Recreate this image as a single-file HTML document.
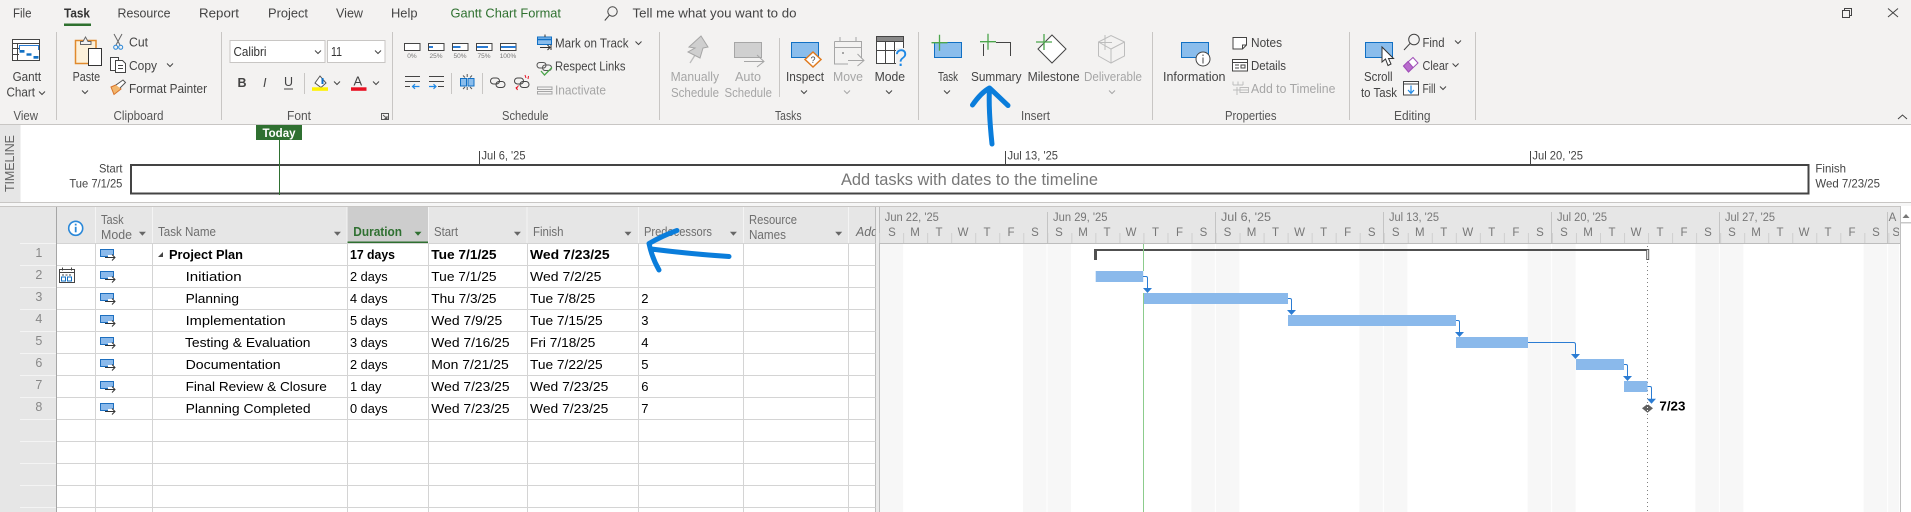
<!DOCTYPE html>
<html lang="en"><head><meta charset="utf-8"><title>Project Plan</title>
<style>
html,body{margin:0;padding:0;width:1911px;height:512px;overflow:hidden;background:#fff}
svg{display:block}
text{font-family:"Liberation Sans",sans-serif;white-space:pre}
.r{font-size:12.5px;fill:#444}
.g{font-size:12.5px;fill:#a6a6a6}
.l{font-size:12.5px;fill:#555}
.h{font-size:12.5px;fill:#6e6e6e}
.c{font-size:13px;fill:#000}
.b{font-size:13px;fill:#000;font-weight:bold}
.n{font-size:12.5px;fill:#888;text-anchor:middle}
.d{font-size:11.5px;fill:#777;text-anchor:middle}
.t{font-size:12px;fill:#444}
.p{font-size:6.5px;fill:#777;text-anchor:middle}
.ch{fill:none;stroke:#444;stroke-width:1}
.i{fill:none;stroke:#444;stroke-width:1}
</style></head><body>
<svg xmlns="http://www.w3.org/2000/svg" width="1911" height="512" viewBox="0 0 1911 512">
<defs>
<path id="chev" d="M-3-1.5 0 1.5 3-1.5" fill="none" stroke="#444" stroke-width="1"/>
<path id="chevg" d="M-3-1.5 0 1.5 3-1.5" fill="none" stroke="#a6a6a6" stroke-width="1"/>
<path id="drop" d="M-3.5-2H3.5L0 2Z" fill="#666"/>
<g id="tm"><rect x=".5" y=".5" width="13" height="7" fill="#8ab9eb" stroke="#1d6fc0"/><path d="M8 8h6V6H8z" fill="#fff"/><path d="M5 8.5H15M12 5.5l3 3-3 3" fill="none" stroke="#333" stroke-width="1"/></g>
<g id="add"><path d="M0-8V8M-8 0H8" stroke="#4ca64c" stroke-width="1.3"/></g>
<g id="bluerect"><rect x=".5" y=".5" width="27" height="15" fill="#8abdec" stroke="#1170c4"/></g>
</defs>

<!-- ribbon -->
<rect width="1911" height="125" fill="#f3f2f1"/>
<rect y="124" width="1911" height="1" fill="#c8c6c4"/>
<text x="13" y="17.5" class="r" textLength="18.5" lengthAdjust="spacingAndGlyphs">File</text>
<text x="64" y="17.5" class="r" font-weight="bold" textLength="26" lengthAdjust="spacingAndGlyphs" style="fill:#333">Task</text>
<rect x="64" y="23.5" width="27" height="2.5" fill="#2f7130"/>
<text x="117.5" y="17.5" class="r" textLength="53" lengthAdjust="spacingAndGlyphs">Resource</text>
<text x="199" y="17.5" class="r" textLength="40" lengthAdjust="spacingAndGlyphs">Report</text>
<text x="268" y="17.5" class="r" textLength="40" lengthAdjust="spacingAndGlyphs">Project</text>
<text x="336" y="17.5" class="r" textLength="27" lengthAdjust="spacingAndGlyphs">View</text>
<text x="391" y="17.5" class="r" textLength="26.5" lengthAdjust="spacingAndGlyphs">Help</text>
<text x="450.5" y="17.5" class="r" style="fill:#2f7130" textLength="110.5" lengthAdjust="spacingAndGlyphs">Gantt Chart Format</text>
<g class="i"><circle cx="612.5" cy="11.5" r="4.7"/><path d="M609.5 15 604.8 20.5"/></g>
<text x="632.5" y="17.5" class="r" textLength="164" lengthAdjust="spacingAndGlyphs">Tell me what you want to do</text>
<!-- window -->
<g class="i"><rect x="1842.5" y="10.5" width="7" height="7"/><path d="M1844.5 10.5V8.5h7v7h-2"/><path d="M1888 8.5 1898 17M1898 8.5 1888 17"/></g>
<path d="M1898 119 1902.5 115 1907 119" class="ch"/>

<!-- group seps -->
<path d="M56.5 32V120M221.5 32V120M392.5 32V120M659.5 32V120M918.5 32V120M1152.5 32V120M1349.5 32V120M1475.5 32V120" stroke="#c8c6c4" fill="none"/>
<text x="13.5" y="120" class="l" textLength="24.5" lengthAdjust="spacingAndGlyphs">View</text>
<text x="113.5" y="120" class="l" textLength="50" lengthAdjust="spacingAndGlyphs">Clipboard</text>
<text x="287" y="120" class="l" textLength="24" lengthAdjust="spacingAndGlyphs">Font</text>
<text x="502" y="120" class="l" textLength="46.5" lengthAdjust="spacingAndGlyphs">Schedule</text>
<text x="775" y="120" class="l" textLength="26.5" lengthAdjust="spacingAndGlyphs">Tasks</text>
<text x="1021" y="120" class="l" textLength="29" lengthAdjust="spacingAndGlyphs">Insert</text>
<text x="1225" y="120" class="l" textLength="51.5" lengthAdjust="spacingAndGlyphs">Properties</text>
<text x="1394" y="120" class="l" textLength="36.5" lengthAdjust="spacingAndGlyphs">Editing</text>

<!-- Gantt chart button -->
<rect x="12.5" y="39.5" width="27" height="21" fill="#fff" stroke="#444"/>
<path d="M12.5 43.5H39.5M17.5 43.5V60.5M12.5 48.5H19M12.5 54.5H19" stroke="#444" fill="none"/>
<path d="M19.5 50V45.5H38.5V50" fill="none" stroke="#2b7cd3"/>
<rect x="19.5" y="50" width="5" height="2.7" fill="#1170c4"/><rect x="26.5" y="53.3" width="5" height="2.4" fill="#1170c4"/><rect x="33.5" y="56" width="5" height="2.7" fill="#1170c4"/>
<text x="12.6" y="81" class="r" textLength="28.5" lengthAdjust="spacingAndGlyphs">Gantt</text>
<text x="6.5" y="96.5" class="r" textLength="28.5" lengthAdjust="spacingAndGlyphs">Chart</text>
<use href="#chev" x="42" y="93"/>

<!-- Clipboard -->
<rect x="75.5" y="40.5" width="20.5" height="23" fill="#fdf1da" stroke="#e08a2c" stroke-width="1.5"/>
<path d="M80.5 44.5V41.5H83L85.5 37 88 41.5H91V44.5Z" fill="#f3f2f1" stroke="#666"/>
<rect x="88.5" y="48.5" width="13" height="17" fill="#fff" stroke="#333"/>
<text x="72.6" y="81" class="r" textLength="27.5" lengthAdjust="spacingAndGlyphs">Paste</text>
<use href="#chev" x="85" y="92"/>
<path d="M114 34 120 45M122 34 116 45" stroke="#666" fill="none"/><circle cx="115.7" cy="47.3" r="2" fill="none" stroke="#2b88d8"/><circle cx="120.7" cy="47.3" r="2" fill="none" stroke="#2b88d8"/>
<text x="129" y="46.7" class="r" textLength="19" lengthAdjust="spacingAndGlyphs">Cut</text>
<path d="M115.5 70.5H110.5V57.5H118.5V60" fill="#fff" stroke="#444"/><path d="M115.5 60.5H122.5L125.5 63.5V72.5H115.5Z" fill="#fff" stroke="#444"/><path d="M118 65.5H123M118 68.5H123" stroke="#444" fill="none"/>
<text x="129" y="70" class="r" textLength="28" lengthAdjust="spacingAndGlyphs">Copy</text>
<use href="#chev" x="170" y="65"/>
<path d="M111 87 118 84 121 89 114 94.5Z" fill="#f2b66c" stroke="#d8732a"/><path d="M116 85 123 80 125.5 82.5 120 88" fill="#fff" stroke="#555"/>
<text x="129" y="93" class="r" textLength="78" lengthAdjust="spacingAndGlyphs">Format Painter</text>

<!-- Font -->
<rect x="230" y="40.5" width="95" height="22" fill="#fff" stroke="#c8c6c4"/>
<rect x="327.5" y="40.5" width="57.5" height="22" fill="#fff" stroke="#c8c6c4"/>
<text x="233.5" y="56" class="r" style="fill:#333" textLength="33" lengthAdjust="spacingAndGlyphs">Calibri</text>
<text x="331" y="56" class="r" style="fill:#333" textLength="11" lengthAdjust="spacingAndGlyphs">11</text>
<use href="#chev" x="318" y="52"/><use href="#chev" x="378" y="52"/>
<text x="237.5" y="87" class="r" font-weight="bold" style="fill:#444">B</text>
<text x="263" y="87" class="r" font-style="italic" style="fill:#444">I</text>
<text x="284" y="86" class="r" style="fill:#444">U</text><rect x="284" y="88.5" width="9" height="1" fill="#444"/>
<path d="M304.5 73V94" stroke="#c8c6c4"/>
<path d="M315 83 320 76 326 83 321 87.5Z" fill="#fff" stroke="#555"/><path d="M322.5 78V84" stroke="#1170c4" stroke-width="2"/>
<rect x="312" y="87.3" width="16" height="3.5" fill="#fff200"/>
<use href="#chev" x="337" y="83"/>
<text x="353.5" y="85.5" class="r" style="fill:#444;font-size:13px">A</text>
<rect x="351" y="87.3" width="15.5" height="3.5" fill="#e81123"/>
<use href="#chev" x="376" y="83"/>
<path d="M381.5 113.5H388.5V119.5H381.5ZM383 115 387 118.5M387 116V118.5H384.5" fill="none" stroke="#555"/>

<!-- Schedule -->
<g fill="#fff" stroke="#444">
<rect x="404.5" y="43.5" width="15.5" height="7"/><rect x="428.5" y="43.5" width="15.5" height="7"/><rect x="452.5" y="43.5" width="15.5" height="7"/><rect x="476.5" y="43.5" width="15.5" height="7"/><rect x="500.5" y="43.5" width="15.5" height="7"/>
</g>
<g fill="#2b7cd3"><rect x="429" y="46" width="4" height="2"/><rect x="453" y="46" width="7.5" height="2"/><rect x="477" y="46" width="11" height="2"/><rect x="501" y="46" width="15" height="2"/></g>
<text x="412" y="58" class="p">0%</text><text x="436" y="58" class="p">25%</text><text x="460" y="58" class="p">50%</text><text x="484" y="58" class="p">75%</text><text x="508" y="58" class="p">100%</text>
<path d="M405 76.5H420M405 81.5H420M405 86.5H410M429 76.5H444M429 81.5H444M438 86.5H444" stroke="#444" fill="none"/>
<path d="M419.5 86.5H412.5M415 84.2 412.5 86.5 415 88.8M429 86.5H436M433.5 84.2 436 86.5 433.5 88.8" stroke="#1e88e5" fill="none" stroke-width="1.2"/>
<path d="M451.5 73V94M482.5 73V94" stroke="#c8c6c4"/>
<rect x="460.5" y="78.5" width="6" height="7.5" fill="#8abdec" stroke="#1170c4"/><rect x="468" y="78.5" width="6" height="7.5" fill="#8abdec" stroke="#1170c4"/>
<path d="M463 75.5 465 77.5M472 75.5 470 77.5M467.2 74V77M463 89 465 87M472 89 470 87M467.2 87V90" stroke="#555" fill="none"/>
<rect x="490.5" y="78" width="9" height="6" rx="3" fill="none" stroke="#444"/><rect x="496" y="81.5" width="9" height="6" rx="3" fill="none" stroke="#444"/>
<rect x="514.5" y="78" width="9" height="6" rx="3" fill="none" stroke="#444"/><rect x="520" y="81.5" width="9" height="6" rx="3" fill="none" stroke="#444"/>
<path d="M525 75 526 78M528.5 76 528 79M516 87 517.5 90M518.5 85.5 516 89" stroke="#e81123" fill="none"/>
<rect x="537.5" y="37" width="14" height="7.5" fill="#8abdec" stroke="#1170c4"/><path d="M537.5 39.5H551.5" stroke="#1170c4" stroke-width="1.5"/><path d="M545 34.5V37M540 47.5H550M547.5 45 550 47.5 547.5 50M551 44.5V50" stroke="#333" fill="none"/>
<text x="555" y="47.5" class="r" textLength="73.5" lengthAdjust="spacingAndGlyphs">Mark on Track</text>
<use href="#chev" x="638.5" y="43"/>
<rect x="537" y="62.5" width="9" height="5.5" rx="2.7" fill="none" stroke="#555"/><rect x="542.5" y="65" width="9" height="5.5" rx="2.7" fill="none" stroke="#555"/>
<path d="M541 71 544.5 75 552 67.5" fill="none" stroke="#4ca64c" stroke-width="1.3"/>
<text x="555" y="70.5" class="r" textLength="70.5" lengthAdjust="spacingAndGlyphs">Respect Links</text>
<rect x="537.5" y="87" width="14.5" height="2.5" fill="none" stroke="#a6a6a6"/><rect x="537.5" y="91.5" width="14.5" height="2.5" fill="none" stroke="#a6a6a6"/>
<text x="555" y="94.5" class="g" textLength="51" lengthAdjust="spacingAndGlyphs">Inactivate</text>

<!-- Tasks -->
<path d="M690 63 697 52" stroke="#bdbdbd" fill="none" stroke-width="1.3"/><path d="M689 47 701 36 708 47 703 48 700 58 688 52 695 48Z" fill="#cfcfcf" stroke="#a6a6a6"/>
<text x="670.6" y="81" class="g" textLength="48.4" lengthAdjust="spacingAndGlyphs">Manually</text>
<text x="671" y="97" class="g" textLength="48" lengthAdjust="spacingAndGlyphs">Schedule</text>
<rect x="734.5" y="42.5" width="27" height="15" fill="#d0d0d0" stroke="#a6a6a6"/><path d="M744 61.5H764M757 55 764 61.5 757 67" fill="none" stroke="#a6a6a6"/>
<text x="735" y="81" class="g" textLength="26" lengthAdjust="spacingAndGlyphs">Auto</text>
<text x="724.5" y="97" class="g" textLength="47.5" lengthAdjust="spacingAndGlyphs">Schedule</text>
<path d="M779.5 38V97" stroke="#c8c6c4"/>
<use href="#bluerect" x="791" y="42"/>
<path d="M813 52 821 59.5 813 67 805 59.5Z" fill="#fff" stroke="#e07b20" stroke-width="1.5"/>
<text x="813" y="63" text-anchor="middle" style="font-size:9px;fill:#444">?</text>
<text x="786" y="81" class="r" textLength="38" lengthAdjust="spacingAndGlyphs">Inspect</text>
<use href="#chev" x="804" y="92"/>
<path d="M834.5 41.5H861.5V58M834.5 41.5V64H848M834.5 47.5H861.5M840 37V41M856 37V41" fill="none" stroke="#a6a6a6"/><path d="M848 60.5H864M857.5 54 864 60.5 857.5 66" fill="none" stroke="#a6a6a6"/><rect x="842" y="52" width="2" height="2" fill="#a6a6a6"/>
<text x="833" y="81" class="g" textLength="30" lengthAdjust="spacingAndGlyphs">Move</text>
<use href="#chevg" x="847" y="92"/>
<rect x="876.5" y="36.5" width="27" height="27" fill="#fff" stroke="#444"/><rect x="876.5" y="36.5" width="27" height="5" fill="#888" stroke="#444"/>
<path d="M876.5 50.5H903.5M885.5 41.5V63.5M894.5 41.5V63.5" stroke="#444" fill="none"/>
<rect x="896" y="48" width="11" height="18" fill="#f3f2f1"/>
<text x="895" y="66" style="font-size:24px;fill:#1e88e5" textLength="12" lengthAdjust="spacingAndGlyphs">?</text>
<text x="874.6" y="81" class="r" textLength="30.5" lengthAdjust="spacingAndGlyphs">Mode</text>
<use href="#chev" x="889" y="92"/>

<!-- Insert -->
<use href="#bluerect" x="934" y="42"/><use href="#add" x="939.5" y="42.7"/>
<text x="938" y="81" class="r" textLength="20" lengthAdjust="spacingAndGlyphs">Task</text>
<use href="#chev" x="947" y="92"/>
<path d="M983.5 44V56M996 42.5H1010.5V56" fill="none" stroke="#444"/><use href="#add" x="988" y="41.7"/>
<text x="971" y="81" class="r" textLength="50.5" lengthAdjust="spacingAndGlyphs">Summary</text>
<path d="M1052 35 1066 49 1052 63 1038 49Z" fill="#fff" stroke="#444"/><use href="#add" x="1044" y="42"/>
<text x="1027.6" y="81" class="r" textLength="52" lengthAdjust="spacingAndGlyphs">Milestone</text>
<path d="M1098.5 42 1111 35.5 1124.5 42V56L1111 63 1098.5 56ZM1098.5 42 1111 49 1124.5 42M1111 49V63" fill="none" stroke="#bdbdbd"/><path d="M1105 35V50M1098 42.5H1112" stroke="#bdbdbd"/>
<text x="1084" y="81" class="g" textLength="58" lengthAdjust="spacingAndGlyphs">Deliverable</text>
<use href="#chevg" x="1112" y="92"/>

<!-- Properties -->
<use href="#bluerect" x="1181" y="42"/>
<circle cx="1203" cy="59" r="7" fill="#fff" stroke="#444"/><rect x="1202.5" y="57.5" width="1" height="6" fill="#444"/><rect x="1202.5" y="54.5" width="1" height="1.5" fill="#444"/>
<text x="1163" y="81" class="r" textLength="62.5" lengthAdjust="spacingAndGlyphs">Information</text>
<path d="M1233 37.5H1246.5V45L1242.5 49H1233ZM1242.5 49V45H1246.5" fill="#fff" stroke="#444"/>
<text x="1251" y="47" class="r" textLength="31" lengthAdjust="spacingAndGlyphs">Notes</text>
<rect x="1232.5" y="59.5" width="15" height="11.5" fill="#fff" stroke="#444"/><path d="M1232.5 62.5H1247.5M1235 65H1239M1235 68H1239M1241 65H1245V68H1241Z" stroke="#444" fill="none"/>
<text x="1251" y="70" class="r" textLength="35" lengthAdjust="spacingAndGlyphs">Details</text>
<path d="M1233 85H1243M1233 81.5V85M1243 81.5V85M1238 81.5V85M1233 90H1248M1240 87.5H1248.5V92.5H1240ZM1237 87V95" stroke="#bdbdbd" fill="none"/>
<text x="1251" y="93" class="g" textLength="84.4" lengthAdjust="spacingAndGlyphs">Add to Timeline</text>

<!-- Editing -->
<use href="#bluerect" x="1365" y="42"/>
<path d="M1382 47V62L1385.5 59 1388 65.5 1391 64 1388.5 58.5H1393.5Z" fill="#fff" stroke="#333"/>
<text x="1364" y="81" class="r" textLength="28.6" lengthAdjust="spacingAndGlyphs">Scroll</text>
<text x="1361" y="97" class="r" textLength="36" lengthAdjust="spacingAndGlyphs">to Task</text>
<circle cx="1414" cy="39.5" r="5.3" fill="none" stroke="#444"/><path d="M1410 43.5 1404 50" stroke="#444"/>
<text x="1422.5" y="47" class="r" textLength="22" lengthAdjust="spacingAndGlyphs">Find</text>
<use href="#chev" x="1458" y="42"/>
<path d="M1403.5 66 1413 57.5 1418 63 1408.5 72Z" fill="#fff" stroke="#a04fb8"/><path d="M1403.5 66 1408 61.5 1413 67.5 1408.5 72Z" fill="#b86ccc" stroke="#a04fb8"/>
<text x="1422.5" y="70" class="r" textLength="26" lengthAdjust="spacingAndGlyphs">Clear</text>
<use href="#chev" x="1455.6" y="65"/>
<rect x="1403.5" y="81.5" width="15" height="13.5" fill="#fff" stroke="#444"/><path d="M1403.5 84H1418.5" stroke="#444"/><path d="M1411 85.5V93M1408 90 1411 93.3 1414 90" stroke="#1e88e5" fill="none" stroke-width="1.2"/>
<text x="1422.5" y="93" class="r" textLength="13" lengthAdjust="spacingAndGlyphs">Fill</text>
<use href="#chev" x="1443" y="88"/>

<!-- timeline -->
<rect y="125" width="20.5" height="78" fill="#e6e6e6"/>
<text transform="translate(14 192) rotate(-90)" style="font-size:12.5px;fill:#666" textLength="57">TIMELINE</text>
<rect x="256" y="125" width="46" height="15" fill="#2f7031"/>
<text x="279" y="137" text-anchor="middle" style="font-size:11.5px;font-weight:bold;fill:#fff">Today</text>
<text x="99" y="172.7" class="t" textLength="23.5" lengthAdjust="spacingAndGlyphs">Start</text>
<text x="69.4" y="187.7" class="t" textLength="53" lengthAdjust="spacingAndGlyphs">Tue 7/1/25</text>
<text x="1815.4" y="172.7" class="t" textLength="30.6" lengthAdjust="spacingAndGlyphs">Finish</text>
<text x="1815.4" y="187.7" class="t" textLength="64.6" lengthAdjust="spacingAndGlyphs">Wed 7/23/25</text>
<path d="M479.5 151V164M1005.5 151V164M1530.5 151V164" stroke="#444"/>
<text x="481.5" y="159.5" class="t" textLength="44" lengthAdjust="spacingAndGlyphs">Jul 6, '25</text>
<text x="1007.5" y="159.5" class="t" textLength="50.5" lengthAdjust="spacingAndGlyphs">Jul 13, '25</text>
<text x="1532.4" y="159.5" class="t" textLength="50.6" lengthAdjust="spacingAndGlyphs">Jul 20, '25</text>
<rect x="131" y="165" width="1677.5" height="28.5" fill="#fff" stroke="#444" stroke-width="2"/>
<path d="M279.5 140V195" stroke="#2f7031"/>
<text x="841" y="185" style="font-size:16.5px;fill:#777" textLength="257" lengthAdjust="spacingAndGlyphs">Add tasks with dates to the timeline</text>
<rect y="202" width="1911" height="1" fill="#c8c6c4"/>
<rect y="203" width="1911" height="4" fill="#f6f6f6"/>

<!-- table base -->
<rect y="207" width="57" height="305" fill="#e6e6e6"/>
<rect x="57" y="207" width="819" height="36" fill="#e6e6e6"/>
<rect x="347" y="207" width="81.5" height="36" fill="#cdcdcd"/>
<rect x="347" y="241.5" width="81.5" height="2.2" fill="#2f7031"/>
<rect x="880" y="207" width="1020" height="36" fill="#e6e6e6"/>
<rect x="875.5" y="207" width="4.5" height="305" fill="#ececec"/>
<path d="M875.5 207V512M879.5 207V512" stroke="#bdbdbd"/>
<rect y="206" width="1900" height="1" fill="#c8c6c4"/>
<path d="M95.5 207V243M152.5 207V243M347 207V243M428.5 207V243M527 207V243M638.5 207V243M743.5 207V243M848.5 207V243" stroke="#f4f4f4"/>
<path d="M95.5 244V512M152.5 244V512M347.5 244V512M428.5 244V512M527.5 244V512M638.5 244V512M743.5 244V512M848.5 244V512" stroke="#d4d4d4"/>
<path d="M57 243.5H875.5M57 265.5H875.5M57 287.5H875.5M57 309.5H875.5M57 331.5H875.5M57 353.5H875.5M57 375.5H875.5M57 397.5H875.5M57 419.5H875.5M57 441.5H875.5M57 463.5H875.5M57 485.5H875.5M57 507.5H875.5" stroke="#d4d4d4"/>
<path d="M20 243.5H56M20 265.5H56M20 287.5H56M20 309.5H56M20 331.5H56M20 353.5H56M20 375.5H56M20 397.5H56M20 419.5H56M20 441.5H56M20 463.5H56M20 485.5H56M20 507.5H56" stroke="#f4f4f4"/>
<path d="M56.5 207V512" stroke="#a6a6a6"/>

<!-- header text -->
<circle cx="75.7" cy="228.3" r="7" fill="#fff" stroke="#2b88d8" stroke-width="1.6"/><rect x="74.8" y="226.8" width="1.8" height="5.5" fill="#2b88d8"/><rect x="74.8" y="223.7" width="1.8" height="1.8" fill="#2b88d8"/>
<text x="101" y="224" class="h" textLength="22.6" lengthAdjust="spacingAndGlyphs">Task</text>
<text x="101" y="239" class="h" textLength="31" lengthAdjust="spacingAndGlyphs">Mode</text>
<text x="158" y="236" class="h" textLength="58" lengthAdjust="spacingAndGlyphs">Task Name</text>
<text x="353.3" y="236" class="h" style="fill:#2f7031;font-weight:bold" textLength="48.7" lengthAdjust="spacingAndGlyphs">Duration</text>
<text x="434" y="236" class="h" textLength="24" lengthAdjust="spacingAndGlyphs">Start</text>
<text x="533" y="236" class="h" textLength="30.5" lengthAdjust="spacingAndGlyphs">Finish</text>
<text x="644" y="236" class="h" textLength="68" lengthAdjust="spacingAndGlyphs">Predecessors</text>
<text x="749" y="224" class="h" textLength="48" lengthAdjust="spacingAndGlyphs">Resource</text>
<text x="749" y="239" class="h" textLength="37" lengthAdjust="spacingAndGlyphs">Names</text>
<svg x="850" y="207" width="25.5" height="36"><text x="6" y="29" class="h" font-style="italic" textLength="22" lengthAdjust="spacingAndGlyphs">Add</text></svg>
<use href="#drop" x="142.4" y="233.7"/><use href="#drop" x="337.4" y="233.7"/>
<path d="M414.5 231.7H421.5L418 235.7Z" fill="#2f7031"/>
<use href="#drop" x="517.4" y="233.7"/><use href="#drop" x="628" y="233.7"/><use href="#drop" x="733.4" y="233.7"/><use href="#drop" x="838.7" y="233.7"/>

<!-- rows -->
<g>
<text x="38.8" y="257" class="n">1</text><text x="38.8" y="279" class="n">2</text><text x="38.8" y="301" class="n">3</text><text x="38.8" y="323" class="n">4</text><text x="38.8" y="345" class="n">5</text><text x="38.8" y="367" class="n">6</text><text x="38.8" y="389" class="n">7</text><text x="38.8" y="411" class="n">8</text>
</g>
<use href="#tm" x="100" y="249"/><use href="#tm" x="100" y="271"/><use href="#tm" x="100" y="293"/><use href="#tm" x="100" y="315"/><use href="#tm" x="100" y="337"/><use href="#tm" x="100" y="359"/><use href="#tm" x="100" y="381"/><use href="#tm" x="100" y="403"/>
<rect x="59.5" y="269.5" width="15" height="13" fill="#fff" stroke="#444"/><path d="M59.5 272.5H74.5M62.5 267.5V270.5M71.5 267.5V270.5" stroke="#444" fill="none"/><path d="M62 275H72" stroke="#444" stroke-dasharray="2 1.5"/><rect x="61.5" y="277" width="4" height="4" fill="#fff" stroke="#1170c4"/><rect x="67.5" y="277" width="4" height="4" fill="#fff" stroke="#1170c4"/>
<path d="M158 257 163 252V257Z" fill="#444"/>

<text x="169" y="259" class="b" textLength="74" lengthAdjust="spacingAndGlyphs">Project Plan</text>
<text x="350" y="259" class="b" textLength="45" lengthAdjust="spacingAndGlyphs">17 days</text>
<text x="431.3" y="259" class="b" textLength="65.2" lengthAdjust="spacingAndGlyphs">Tue 7/1/25</text>
<text x="530" y="259" class="b" textLength="79.6" lengthAdjust="spacingAndGlyphs">Wed 7/23/25</text>

<text x="185.6" y="281" class="c" textLength="56" lengthAdjust="spacingAndGlyphs">Initiation</text>
<text x="350" y="281" class="c" textLength="37.6" lengthAdjust="spacingAndGlyphs">2 days</text>
<text x="431.3" y="281" class="c" textLength="65.2" lengthAdjust="spacingAndGlyphs">Tue 7/1/25</text>
<text x="530" y="281" class="c" textLength="71.4" lengthAdjust="spacingAndGlyphs">Wed 7/2/25</text>

<text x="185.6" y="303" class="c" textLength="53.4" lengthAdjust="spacingAndGlyphs">Planning</text>
<text x="350" y="303" class="c" textLength="37.6" lengthAdjust="spacingAndGlyphs">4 days</text>
<text x="431.3" y="303" class="c" textLength="65.2" lengthAdjust="spacingAndGlyphs">Thu 7/3/25</text>
<text x="530" y="303" class="c" textLength="65.3" lengthAdjust="spacingAndGlyphs">Tue 7/8/25</text>
<text x="641.2" y="303" class="c">2</text>

<text x="185.6" y="325" class="c" textLength="100" lengthAdjust="spacingAndGlyphs">Implementation</text>
<text x="350" y="325" class="c" textLength="37.6" lengthAdjust="spacingAndGlyphs">5 days</text>
<text x="431.3" y="325" class="c" textLength="70.9" lengthAdjust="spacingAndGlyphs">Wed 7/9/25</text>
<text x="530" y="325" class="c" textLength="72.6" lengthAdjust="spacingAndGlyphs">Tue 7/15/25</text>
<text x="641.2" y="325" class="c">3</text>

<text x="185" y="347" class="c" textLength="125.5" lengthAdjust="spacingAndGlyphs">Testing &amp; Evaluation</text>
<text x="350" y="347" class="c" textLength="37.6" lengthAdjust="spacingAndGlyphs">3 days</text>
<text x="431.3" y="347" class="c" textLength="78.3" lengthAdjust="spacingAndGlyphs">Wed 7/16/25</text>
<text x="530" y="347" class="c" textLength="65.3" lengthAdjust="spacingAndGlyphs">Fri 7/18/25</text>
<text x="641.2" y="347" class="c">4</text>

<text x="185.6" y="369" class="c" textLength="95" lengthAdjust="spacingAndGlyphs">Documentation</text>
<text x="350" y="369" class="c" textLength="37.6" lengthAdjust="spacingAndGlyphs">2 days</text>
<text x="431.3" y="369" class="c" textLength="77.5" lengthAdjust="spacingAndGlyphs">Mon 7/21/25</text>
<text x="530" y="369" class="c" textLength="72.6" lengthAdjust="spacingAndGlyphs">Tue 7/22/25</text>
<text x="641.2" y="369" class="c">5</text>

<text x="185.6" y="391" class="c" textLength="141.2" lengthAdjust="spacingAndGlyphs">Final Review &amp; Closure</text>
<text x="350" y="391" class="c" textLength="31.5" lengthAdjust="spacingAndGlyphs">1 day</text>
<text x="431.3" y="391" class="c" textLength="78.3" lengthAdjust="spacingAndGlyphs">Wed 7/23/25</text>
<text x="530" y="391" class="c" textLength="78.3" lengthAdjust="spacingAndGlyphs">Wed 7/23/25</text>
<text x="641.2" y="391" class="c">6</text>

<text x="185.6" y="413" class="c" textLength="125" lengthAdjust="spacingAndGlyphs">Planning Completed</text>
<text x="350" y="413" class="c" textLength="37.6" lengthAdjust="spacingAndGlyphs">0 days</text>
<text x="431.3" y="413" class="c" textLength="78.3" lengthAdjust="spacingAndGlyphs">Wed 7/23/25</text>
<text x="530" y="413" class="c" textLength="78.3" lengthAdjust="spacingAndGlyphs">Wed 7/23/25</text>
<text x="641.2" y="413" class="c">7</text>

<!-- gantt header -->
<line x1="879.1" x2="1899" y1="238" y2="238" stroke="#cfcfcf" stroke-width="10" stroke-dasharray="1 23.03"/>
<path d="M1047.5 212V243M1215.5 212V243M1383.5 212V243M1551.5 212V243M1719.5 212V243M1887.5 212V243" stroke="#c4c4c4"/>
<rect x="880" y="243" width="1020" height="1" fill="#bdbdbd"/>
<text x="884.8" y="221" class="d" style="text-anchor:start" textLength="54" lengthAdjust="spacingAndGlyphs">Jun 22, '25</text>
<text x="1053" y="221" class="d" style="text-anchor:start" textLength="54.5" lengthAdjust="spacingAndGlyphs">Jun 29, '25</text>
<text x="1221" y="221" class="d" style="text-anchor:start" textLength="50" lengthAdjust="spacingAndGlyphs">Jul 6, '25</text>
<text x="1389" y="221" class="d" style="text-anchor:start" textLength="50" lengthAdjust="spacingAndGlyphs">Jul 13, '25</text>
<text x="1557" y="221" class="d" style="text-anchor:start" textLength="50" lengthAdjust="spacingAndGlyphs">Jul 20, '25</text>
<text x="1725" y="221" class="d" style="text-anchor:start" textLength="50" lengthAdjust="spacingAndGlyphs">Jul 27, '25</text>
<svg x="880" y="207" width="1019" height="36"><text x="12 35 59 83 107 131 155 179 203 227 251 275.5 299.5 323.5 347.5 371.5 395.5 419.5 443.6 467.6 491.7 515.7 539.8 563.8 587.8 611.8 635.9 659.9 684 708 732 756 780 804 828 852 876 900 924 948 972 996 1020" y="29" class="d">SMTWTFSSMTWTFSSMTWTFSSMTWTFSSMTWTFSSMTWTFSSS</text><text x="1012.5" y="14" class="d">A</text></svg>

<!-- stripes -->
<g fill="#f7f7f7">
<rect x="880" y="244" width="23.1" height="268"/>
<rect x="1023" y="244" width="23.5" height="268"/><rect x="1047.5" y="244" width="23.5" height="268"/>
<rect x="1191.3" y="244" width="23.5" height="268"/><rect x="1215.8" y="244" width="23.5" height="268"/>
<rect x="1359.4" y="244" width="23.5" height="268"/><rect x="1383.9" y="244" width="23.5" height="268"/>
<rect x="1527.6" y="244" width="23.5" height="268"/><rect x="1552.1" y="244" width="23.5" height="268"/>
<rect x="1695.4" y="244" width="23.5" height="268"/><rect x="1719.9" y="244" width="23.5" height="268"/>
<rect x="1863.6" y="244" width="23.5" height="268"/><rect x="1888.1" y="244" width="11" height="268"/>
</g>
<!-- today & project finish -->
<path d="M1647.5 246V512" stroke="#808080" stroke-dasharray="1 3"/>
<!-- summary -->
<path d="M1094 249H1649V251H1097V260H1094Z" fill="#505050"/>
<rect x="1646.7" y="249.5" width="2" height="10" fill="#fff" stroke="#606060"/>
<!-- bars -->
<g fill="#8ab9eb">
<rect x="1095.7" y="271" width="47.5" height="11"/>
<rect x="1143" y="293" width="145" height="11"/>
<rect x="1288" y="315" width="168" height="11"/>
<rect x="1456" y="337" width="72" height="11"/>
<rect x="1576" y="359" width="48" height="11"/>
<rect x="1624" y="381" width="23.5" height="11"/>
</g>
<path d="M1143.5 293V512" stroke="#8ccc8c"/>
<path d="M1143.5 244V271" stroke="#8ccc8c"/>
<!-- links -->
<g fill="none" stroke="#2b7cd3">
<path d="M1143 276.5H1146Q1147.5 276.5 1147.5 278V289"/>
<path d="M1288 298.5H1290Q1291.5 298.5 1291.5 300V311"/>
<path d="M1456 320.5H1458Q1459.5 320.5 1459.5 322V333"/>
<path d="M1528 342.5H1573.5Q1575.5 342.5 1575.5 344.5V355"/>
<path d="M1624 364.5H1626Q1627.5 364.5 1627.5 366V377"/>
<path d="M1647.5 386.5H1650Q1651.5 386.5 1651.5 388V399"/>
</g>
<g fill="#2b7cd3">
<path d="M1143 288H1152L1147.5 293Z"/>
<path d="M1287 310H1296L1291.5 315Z"/>
<path d="M1455 332H1464L1459.5 337Z"/>
<path d="M1571 354H1580L1575.5 359Z"/>
<path d="M1623 376H1632L1627.5 381Z"/>
<path d="M1647 398.7H1656L1651.5 403.7Z"/>
</g>
<path d="M1647.5 404 1653 408.3 1647.5 412.7 1642 408.3Z" fill="#606060"/>
<path d="M1647.5 404V413" stroke="#fff" stroke-dasharray="1 2"/>
<text x="1659.4" y="410.7" class="b" textLength="26" lengthAdjust="spacingAndGlyphs">7/23</text>

<!-- scrollbar -->
<rect x="1900" y="206" width="11" height="306" fill="#fff"/>
<path d="M1900.5 206V512" stroke="#c0c0c0"/>
<rect x="1901" y="222" width="10" height="1.5" fill="#c8c8c8"/>
<path d="M1902.5 218H1909.5L1906 214Z" fill="#777"/>

<!-- annotations -->
<g fill="none" stroke="#0a7ddb" stroke-width="5" stroke-linecap="round" stroke-linejoin="round">
<path d="M992 144C990 125 988.5 105 989.5 88M972.5 105C978 97 984 91 989.5 88 995 93 1002 100 1008 105.5"/>
<path d="M729 256.5C705 255 675 252 651 249M677 230.5C667 234 657 239 649 243.5 651 253 655 263 659 270"/>
</g>
</svg>
</body></html>
